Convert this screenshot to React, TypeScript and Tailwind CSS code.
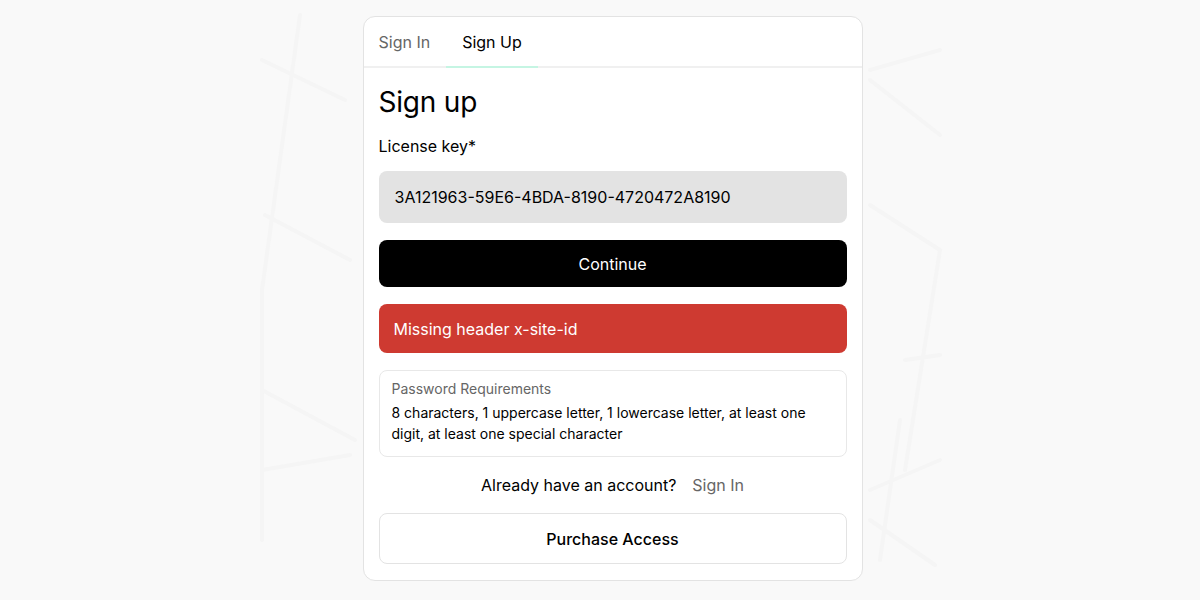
import React from 'react';

export default function App() {
  return (
    <div className="relative min-h-[600px] w-full overflow-hidden bg-[#f9f9f9] font-['Inter',sans-serif] text-black">
      {/* faint sketch lines behind the card */}
      <svg className="absolute inset-0 h-full w-full" viewBox="0 0 1200 600" fill="none">
        <g stroke="#f5f5f5" strokeWidth="4" strokeLinecap="round">
          <path d="M300 15 L262 290 L262 540" />
          <path d="M262 60 L345 100" />
          <path d="M265 215 L350 260" />
          <path d="M262 390 L355 440" />
          <path d="M262 470 L350 455" />
          <path d="M940 50 L870 70" />
          <path d="M870 80 L940 135" />
          <path d="M870 205 L940 250 L905 470" />
          <path d="M905 360 L940 355" />
          <path d="M880 560 L900 420" />
          <path d="M870 490 L940 460" />
          <path d="M870 520 L935 565" />
        </g>
      </svg>

      <div className="relative flex justify-center pt-4 pl-[25px]">
        <div className="w-[500px] rounded-xl border border-[#e3e3e3] bg-white">
          <div className="flex h-[51px] items-end border-b-2 border-[#f0f0f0] px-[15px]">
            <button className="flex h-full items-center pr-4 text-base text-[#666666]">Sign In</button>
            <button className="-mb-[2px] flex h-[calc(100%+2px)] items-center border-b-2 border-[#c5f5e3] px-4 text-base text-black">
              Sign Up
            </button>
          </div>

          <div className="px-[15px] pt-[16px] pb-[16px]">
            <h1 className="text-[28px] leading-[36px] font-normal tracking-[-0.2px]">Sign up</h1>

            <label className="mt-[14px] block text-base leading-6">License key*</label>
            <div className="mt-[13px] flex h-[52px] items-center rounded-lg bg-[#e3e3e3] px-4 text-base">
              3A121963-59E6-4BDA-8190-4720472A8190
            </div>

            <button className="mt-[17px] h-[47px] w-full rounded-lg bg-black text-base text-white">Continue</button>

            <div className="mt-[17px] flex h-[49px] items-center rounded-lg bg-[#ce3a31] px-[15px] text-base text-white">
              Missing header x-site-id
            </div>

            <div className="mt-[17px] rounded-lg border border-[#e8e8e8] px-3 pt-[8px] pb-[12px]">
              <div className="text-sm leading-5 text-[#666666]">Password Requirements</div>
              <div className="mt-[3px] text-sm leading-[21px]">
                8 characters, 1 uppercase letter, 1 lowercase letter, at least one digit, at least one special character
              </div>
            </div>

            <div className="mt-[16px] flex h-[24px] items-center justify-center gap-4 text-base">
              <span>Already have an account?</span>
              <span className="text-[#666666]">Sign In</span>
            </div>

            <button className="mt-[16px] h-[51px] w-full rounded-lg border border-[#e3e3e3] bg-white text-base font-medium">
              Purchase Access
            </button>
          </div>
        </div>
      </div>
    </div>
  );
}
